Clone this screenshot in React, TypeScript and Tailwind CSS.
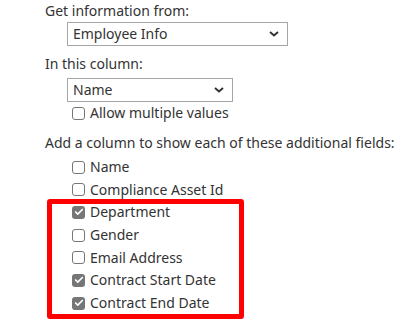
import { Check } from "lucide-react";

function Chevron() {
  return (
    <svg width="10" height="6" viewBox="0 0 10 6" className="text-[#333]">
      <path d="M1 1l4 3.5L9 1" fill="none" stroke="currentColor" strokeWidth="2" />
    </svg>
  );
}

function Select({ value, width }: { value: string; width: string }) {
  return (
    <div
      className={`${width} h-[24px] border border-[#a6a6a6] bg-white flex items-center justify-between pl-[5px] pr-[8px]`}
    >
      <span>{value}</span>
      <Chevron />
    </div>
  );
}

function Box({ label, checked }: { label: string; checked?: boolean }) {
  return (
    <div className="flex items-center h-[22.7px] pl-[27px]">
      <span
        className={`w-[13px] h-[13px] rounded-[3px] flex items-center justify-center mr-[5px] ${
          checked ? "bg-[#767676]" : "border border-[#767676] bg-white"
        }`}
      >
        {checked && <Check className="w-[10px] h-[10px] text-white" strokeWidth={4} />}
      </span>
      <span>{label}</span>
    </div>
  );
}

const fields = [
  { label: "Name" },
  { label: "Compliance Asset Id" },
  { label: "Department", checked: true },
  { label: "Gender" },
  { label: "Email Address" },
  { label: "Contract Start Date", checked: true },
  { label: "Contract End Date", checked: true },
];

export default function App() {
  return (
    <div
      className="relative w-[408px] h-[320px] overflow-hidden bg-white text-[#333] text-[14px] leading-[20px] pl-[45px] pt-px"
      style={{ fontFamily: '"Segoe UI", "Noto Sans", sans-serif' }}
    >
      <div className="h-[20px]">Get information from:</div>
      <div className="pl-[22px] mt-px">
        <Select value="Employee Info" width="w-[221px]" />
      </div>
      <div className="h-[20px] mt-[8px]">In this column:</div>
      <div className="pl-[22px] mt-[4px]">
        <Select value="Name" width="w-[166px]" />
      </div>
      <Box label="Allow multiple values" />
      <div className="h-[20px] mt-[8px]">Add a column to show each of these additional fields:</div>
      <div className="mt-[3px]">
        {fields.map((f) => (
          <Box key={f.label} label={f.label} checked={f.checked} />
        ))}
      </div>
      <div className="absolute left-[47px] top-[199px] w-[197px] h-[120px] border-[5px] border-[#ff0000] rounded-[3px]" />
    </div>
  );
}
